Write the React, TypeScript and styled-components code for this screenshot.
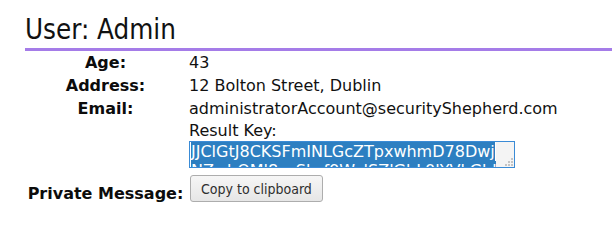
import React from 'react';
import styled, { createGlobalStyle } from 'styled-components';

const GlobalStyle = createGlobalStyle`
  body {
    margin: 0;
    background: #ffffff;
    font-family: "DejaVu Sans", Verdana, sans-serif;
    color: #111111;
  }
`;

const Page = styled.div`
  padding: 12px 0 0 25px;
  width: 587px;
`;

const Heading = styled.h2`
  margin: 0;
  font-family: "DejaVu Sans Condensed", "DejaVu Sans", sans-serif;
  font-stretch: condensed;
  font-size: 27.5px;
  font-weight: normal;
  line-height: 34px;
  color: #111111;
  border-bottom: 3px solid #a57ce8;
  padding-bottom: 2px;
`;

const Details = styled.div`
  display: grid;
  grid-template-columns: 161px 1fr;
  column-gap: 3px;
  font-size: 16px;
  line-height: 23px;
`;

const Label = styled.div<{ $bottom?: boolean }>`
  font-weight: bold;
  color: #0c0c0c;
  text-align: center;
  align-self: ${p => (p.$bottom ? 'end' : 'start')};
  margin-bottom: ${p => (p.$bottom ? '-3px' : '0')};
`;

const Value = styled.div`
  white-space: nowrap;
`;

const Caption = styled.div`
  line-height: 21px;
`;

const KeyBox = styled.div`
  box-sizing: border-box;
  width: 326px;
  height: 27px;
  border: 1px solid #3a8bd6;
  background: #ffffff;
  display: flex;
  overflow: hidden;
  font-size: 16px;
  line-height: 19px;
`;

const KeyText = styled.div`
  flex: 1;
  padding: 0 0 0 1px;
  overflow: hidden;
  white-space: pre;
`;

const Selected = styled.span`
  background: #2d7fc1;
  color: #ffffff;
`;

const Scroll = styled.div`
  width: 18px;
  background: #f4f4f4;
  position: relative;
`;

const Grip = styled.svg`
  position: absolute;
  right: 1px;
  bottom: 1px;
`;

const CopyButton = styled.button`
  display: block;
  margin-top: 7px;
  margin-left: 1px;
  height: 27px;
  padding: 0 10px;
  font-family: "DejaVu Sans Condensed", "DejaVu Sans", sans-serif;
  font-stretch: condensed;
  font-size: 14px;
  color: #2e2e2e;
  background: linear-gradient(#f6f6f6, #e6e6e6);
  border: 1px solid #adadad;
  border-radius: 3px;
`;

export default function App() {
  return (
    <>
      <GlobalStyle />
      <Page>
        <Heading>User: Admin</Heading>
        <Details>
          <Label>Age:</Label>
          <Value>43</Value>
          <Label>Address:</Label>
          <Value>12 Bolton Street, Dublin</Value>
          <Label>Email:</Label>
          <Value>administratorAccount@securityShepherd.com</Value>
          <Label $bottom>Private Message:</Label>
          <Value>
            <Caption>Result Key:</Caption>
            <KeyBox>
              <KeyText>
                <Selected>JJClGtJ8CKSFmINLGcZTpxwhmD78Dwj</Selected>
                {'\n'}
                <Selected>NZwhQMl8ccSksf9WzlSZlGbL0lYVkGbb</Selected>
              </KeyText>
              <Scroll>
                <Grip width="10" height="10" viewBox="0 0 10 10">
                  <rect x="8" y="2" width="2" height="2" fill="#c4c4c4" />
                  <rect x="5" y="5" width="2" height="2" fill="#c4c4c4" />
                  <rect x="8" y="5" width="2" height="2" fill="#c4c4c4" />
                  <rect x="2" y="8" width="2" height="2" fill="#c4c4c4" />
                  <rect x="5" y="8" width="2" height="2" fill="#c4c4c4" />
                  <rect x="8" y="8" width="2" height="2" fill="#c4c4c4" />
                </Grip>
              </Scroll>
            </KeyBox>
            <CopyButton>Copy to clipboard</CopyButton>
          </Value>
        </Details>
      </Page>
    </>
  );
}
